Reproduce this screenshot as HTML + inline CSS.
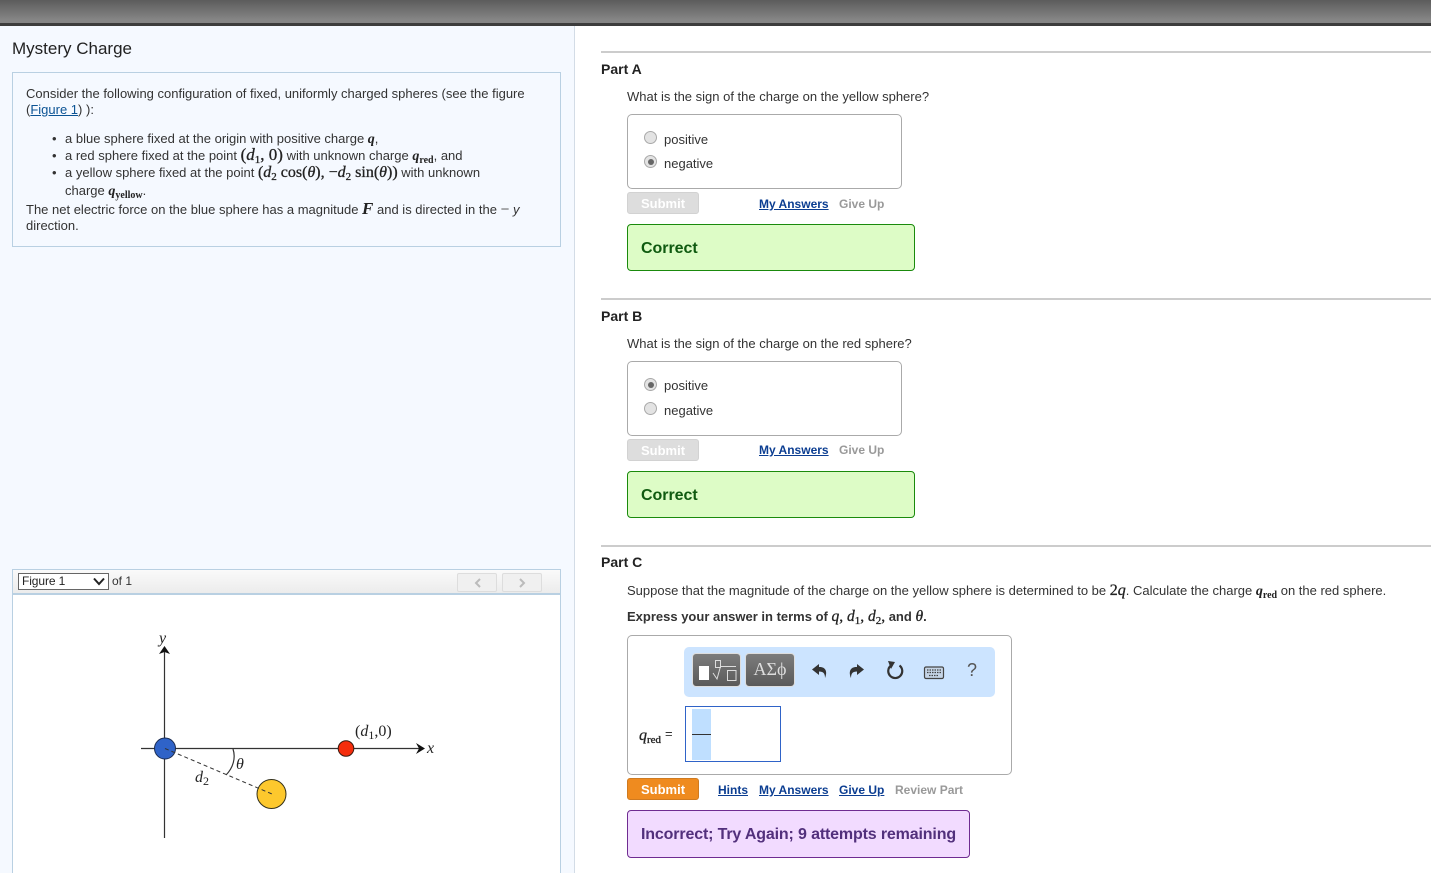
<!DOCTYPE html>
<html><head><meta charset="utf-8"><style>
*{box-sizing:border-box}
html,body{margin:0;padding:0;width:1431px;height:873px;overflow:hidden;background:#fff;font-family:"Liberation Sans",Arial,sans-serif;font-size:13px;color:#333}
.a{position:absolute;white-space:nowrap;line-height:16px}
.m{font-family:"Liberation Serif",serif;font-weight:bold;font-style:italic;color:#222;font-size:14px;line-height:0}
.r{font-family:"Liberation Serif",serif;color:#222;line-height:0;-webkit-text-stroke:.3px #222}
.sub{font-size:10px;font-family:"Liberation Serif",serif;font-weight:bold;position:relative;top:3px;font-style:normal}
.s{font-size:11px;position:relative;top:3px}
a{color:#0b3d91}
.h{font-weight:bold;color:#222;font-size:14px}
.hr{position:absolute;left:601px;width:830px;height:2px;background:#ccc}
.box{position:absolute;background:#fff;border:1px solid #aaa;border-radius:5px}
.rad{position:absolute;width:13px;height:13px;border-radius:50%;background:#e3e3e3;border:1px solid #a9a9a9}
.rad.on::after{content:"";position:absolute;left:2.500px;top:2.500px;width:6px;height:6px;border-radius:50%;background:#666}
.sb{position:absolute;left:627px;width:72px;height:22px;background:#ddd;border:1px solid #d2d2d2;border-radius:3px;color:#fff;font-weight:bold;font-size:13px;text-align:center;line-height:21px}
.ok{position:absolute;left:627px;width:288px;height:47px;background:#ddfcc6;border:1px solid #1a8a0c;border-radius:4px;color:#0f5a10;font-weight:bold;font-size:16px;line-height:47px;padding-left:13px;letter-spacing:-.03px}
.lk{font-size:12px;font-weight:bold;color:#0b3d91;text-decoration:underline}
.g{font-size:12px;font-weight:bold;color:#999}
</style></head><body>
<div style="position:absolute;left:0;top:0;width:1431px;height:26px;background:linear-gradient(#5c5c5c,#858585 85%);border-bottom:3px solid #3c3c3c"></div>
<div style="position:absolute;left:0;top:26px;width:575px;height:847px;background:#f5f9ff;border-right:1px solid #d3dce6"></div>
<div class="a" style="left:12px;top:39px;font-size:17px;line-height:20px;color:#222">Mystery Charge</div>
<div style="position:absolute;left:12px;top:72px;width:549px;height:175px;border:1px solid #b9d0e2"></div>
<div class="a" style="left:26px;top:86px">Consider the following configuration of fixed, uniformly charged spheres (see the figure</div>
<div class="a" style="left:26px;top:102px">(<a href="#" style="color:#0b5394">Figure 1</a>) ):</div>
<div class="a" style="left:52px;top:131px">•</div>
<div class="a" style="left:65px;top:131px">a blue sphere fixed at the origin with positive charge <span class="m">q</span>,</div>
<div class="a" style="left:52px;top:148px">•</div>
<div class="a" style="left:65px;top:148px">a red sphere fixed at the point <span class="r" style="font-size:17px">(<i>d</i><span class="s">1</span>, 0)</span> with unknown charge <span class="m">q<span class="sub">red</span></span>, and</div>
<div class="a" style="left:52px;top:165px">•</div>
<div class="a" style="left:65px;top:165px">a yellow sphere fixed at the point <span class="r" style="font-size:16px">(<i>d</i><span class="s">2</span> cos(<i>θ</i>), −<i>d</i><span class="s">2</span> sin(<i>θ</i>))</span> with unknown</div>
<div class="a" style="left:65px;top:183px">charge <span class="m">q<span class="sub">yellow</span></span>.</div>
<div class="a" style="left:26px;top:202px">The net electric force on the blue sphere has a magnitude <span class="m" style="font-size:17px">F</span> and is directed in the <span style="color:#666;font-size:15px;line-height:0">−</span> <i>y</i></div>
<div class="a" style="left:26px;top:218px">direction.</div>

<div style="position:absolute;left:12px;top:569px;width:549px;height:304px;background:#fff;border:1px solid #b9d0e2;border-bottom:0"></div>
<div style="position:absolute;left:13px;top:570px;width:547px;height:25px;background:linear-gradient(#fafafa,#ececec);border-bottom:2px solid #b9d0e2"></div>
<div class="a" style="left:18px;top:573px;width:91px;height:17px;border:1px solid #666;background:#fff;font-size:12px;line-height:14px;padding-left:3px;letter-spacing:-.1px;color:#222">Figure 1<svg style="position:absolute;right:2px;top:3px" width="14" height="9"><path d="M2 1.500 L7 7 L12 1.500" fill="none" stroke="#222" stroke-width="2"/></svg></div>
<div class="a" style="left:112px;top:573px;font-size:12px;color:#333">of 1</div>
<div style="position:absolute;left:457px;top:573px;width:40px;height:19px;border:1px solid #ddd;border-radius:2px;background:#f0f0f0"></div>
<div style="position:absolute;left:502px;top:573px;width:40px;height:19px;border:1px solid #ddd;border-radius:2px;background:#f0f0f0"></div>
<svg style="position:absolute;left:0;top:0" width="575" height="873">
<path d="M480 579 L476 583 L480 587" fill="none" stroke="#bbb" stroke-width="2"/>
<path d="M520 579 L524 583 L520 587" fill="none" stroke="#bbb" stroke-width="2"/>
<path d="M164.500 838 V650 M141 748.500 H420" stroke="#333" stroke-width="1.200" fill="none"/>
<path d="M159 654 L164.500 646 L170 654 L164.500 652Z" fill="#111"/>
<path d="M416 743 L425 748.500 L416 754 L419 748.500Z" fill="#111"/>
<circle cx="165" cy="748.500" r="10.500" fill="#2f63c8" stroke="#1a2b50" stroke-width="1"/>
<circle cx="346" cy="748.500" r="7.800" fill="#f52d0c" stroke="#3a1a10" stroke-width="1"/>
<circle cx="271.500" cy="794" r="14.500" fill="#fdc82d" stroke="#33301a" stroke-width="1"/>
<path d="M165 748.500 L272 794" stroke="#333" stroke-width="1" stroke-dasharray="4 3" fill="none"/>
<path d="M233 749 C236 758 233 768 226 775" stroke="#333" stroke-width="1.200" fill="none"/>
<g font-family="Liberation Serif,serif" font-style="italic" fill="#222" font-size="16">
<text x="159" y="643">y</text>
<text x="427" y="753">x</text>
<text x="236" y="769">θ</text>
<text x="195" y="782">d<tspan font-size="12" font-style="normal" dy="3">2</tspan></text>
<text x="355" y="736"><tspan font-style="normal">(</tspan>d<tspan font-size="12" font-style="normal" dy="3">1</tspan><tspan font-style="normal" dy="-3">,0)</tspan></text>
</g></svg>

<div class="hr" style="top:51px"></div>
<div class="a h" style="left:601px;top:61px">Part A</div>
<div class="a" style="left:627px;top:89px">What is the sign of the charge on the yellow sphere?</div>
<div class="box" style="left:627px;top:114px;width:275px;height:75px"></div>
<div class="rad" style="left:644px;top:131px"></div>
<div class="a" style="left:664px;top:132px">positive</div>
<div class="rad on" style="left:644px;top:155px"></div>
<div class="a" style="left:664px;top:156px">negative</div>
<div class="sb" style="top:192px">Submit</div>
<div class="a lk" style="left:759px;top:196px">My Answers</div>
<div class="a g" style="left:839px;top:196px">Give Up</div>
<div class="ok" style="top:224px">Correct</div>

<div class="hr" style="top:298px"></div>
<div class="a h" style="left:601px;top:308px">Part B</div>
<div class="a" style="left:627px;top:336px">What is the sign of the charge on the red sphere?</div>
<div class="box" style="left:627px;top:361px;width:275px;height:75px"></div>
<div class="rad on" style="left:644px;top:378px"></div>
<div class="a" style="left:664px;top:378px">positive</div>
<div class="rad" style="left:644px;top:402px"></div>
<div class="a" style="left:664px;top:403px">negative</div>
<div class="sb" style="top:439px">Submit</div>
<div class="a lk" style="left:759px;top:442px">My Answers</div>
<div class="a g" style="left:839px;top:442px">Give Up</div>
<div class="ok" style="top:471px">Correct</div>

<div class="hr" style="top:545px"></div>
<div class="a h" style="left:601px;top:554px">Part C</div>
<div class="a" style="left:627px;top:583px">Suppose that the magnitude of the charge on the yellow sphere is determined to be <span class="r" style="font-size:16px">2<i>q</i></span>. Calculate the charge <span class="m">q<span class="sub">red</span></span> on the red sphere.</div>
<div class="a h" style="left:627px;top:609px;color:#333;font-size:13px">Express your answer in terms of <span class="r" style="font-size:15.500px;font-weight:normal"><i>q</i>, <i>d</i><span class="s">1</span>, <i>d</i><span class="s">2</span>,</span> and <span class="r" style="font-size:15.500px;font-weight:normal"><i>θ</i></span>.</div>
<div class="box" style="left:627px;top:635px;width:385px;height:140px"></div>
<div style="position:absolute;left:684px;top:647px;width:311px;height:50px;background:#cce4ff;border-radius:5px"></div>
<div style="position:absolute;left:692px;top:653px;width:49px;height:34px;background:linear-gradient(#7c7c7c,#5a5a5a);border:1px solid #ddd;border-radius:4px"></div>
<div style="position:absolute;left:745px;top:653px;width:50px;height:34px;background:linear-gradient(#7c7c7c,#5a5a5a);border:1px solid #ddd;border-radius:4px;color:#ddd;font:18px/31px 'Liberation Serif',serif;text-align:center">ΑΣϕ</div>
<svg style="position:absolute;left:684px;top:647px" width="311" height="50">
<rect x="15" y="19" width="10" height="14" fill="#fff"/>
<rect x="31.500" y="13.500" width="5" height="7" fill="none" stroke="#ddd"/>
<path d="M29 26 L33 32 L36.500 19.500 H52" fill="none" stroke="#ddd"/>
<rect x="43.500" y="23.500" width="8.500" height="10" fill="none" stroke="#ddd"/>
<path d="M135 17 L128 22.500 L135 28 V24.500 C139 24.500 141 26 141 31 C144 24 141 19.500 135 20Z" fill="#333"/>
<path d="M173 17 L180 22.500 L173 28 V24.500 C169 24.500 167 26 167 31 C164 24 167 19.500 173 20Z" fill="#333"/>
<path d="M215.500 18.500 A7 7 0 1 1 207 18.500" fill="none" stroke="#333" stroke-width="2.200"/>
<path d="M204 14 L211 15 L207 22Z" fill="#333"/>
<rect x="240.500" y="20" width="19" height="11.500" rx="1.500" fill="#c5d4e6" stroke="#444" stroke-width="1.200"/>
<path d="M243 23 H257 M243 25.500 H257 M245 28.500 H255" stroke="#444" stroke-width="1.200" stroke-dasharray="1.500 1"/>
<text x="283" y="29" font-family="Liberation Sans,sans-serif" font-size="18" fill="#555">?</text>
</svg>
<div class="a" style="left:639px;top:727px;font-size:14px"><span class="r" style="font-size:16px"><i>q</i><span class="s">red</span></span> <span style="position:relative;left:0;top:-2px;font-size:13px">=</span></div>
<div style="position:absolute;left:685px;top:706px;width:96px;height:56px;border:1px solid #2f63c8;background:#fff"></div>
<div style="position:absolute;left:692px;top:709px;width:19px;height:51px;background:#bfdfff"></div>
<div style="position:absolute;left:692px;top:734px;width:19px;height:1px;background:#333"></div>
<div class="sb" style="top:778px;background:#ef8b1f;border-color:#cf7a20">Submit</div>
<div class="a lk" style="left:718px;top:782px">Hints</div>
<div class="a lk" style="left:759px;top:782px">My Answers</div>
<div class="a lk" style="left:839px;top:782px">Give Up</div>
<div class="a g" style="left:895px;top:782px">Review Part</div>
<div style="position:absolute;left:627px;top:810px;width:343px;height:48px;background:#f2dbff;border:1px solid #6f2c91;border-radius:4px;color:#52307c;font-weight:bold;font-size:16px;line-height:47px;padding-left:13px;white-space:nowrap;letter-spacing:-.15px">Incorrect; Try Again; 9 attempts remaining</div>
</body></html>
